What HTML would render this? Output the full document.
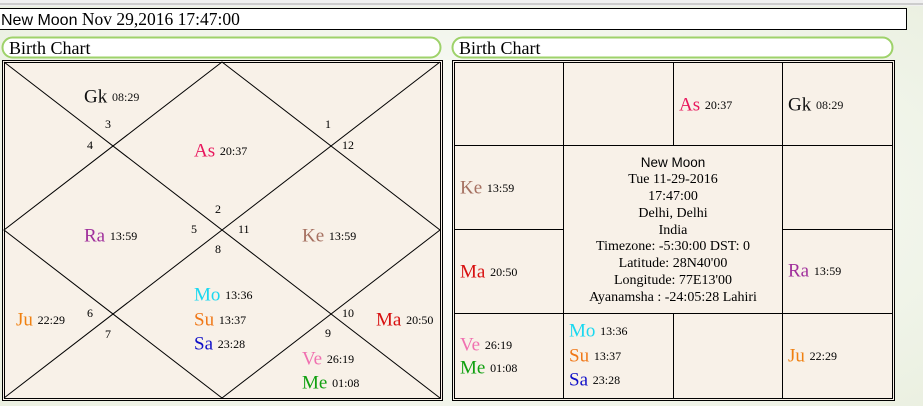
<!DOCTYPE html>
<html><head><meta charset="utf-8"><style>
html,body{margin:0;padding:0;width:923px;height:406px;overflow:hidden;background:#f4f7ef;font-family:"Liberation Serif",serif}
</style></head><body>
<svg width="923" height="406" xmlns="http://www.w3.org/2000/svg" style="position:absolute;left:0;top:0">
<defs>
<radialGradient id="bg" cx="0.5" cy="0.5" r="0.8"><stop offset="0" stop-color="#ffffff"/><stop offset="1" stop-color="#e8eedd"/></radialGradient>
</defs>
<rect width="923" height="406" fill="url(#bg)"/>
<rect x="0" y="0" width="923" height="6" fill="#f0f0f0"/>
<line x1="0" y1="4" x2="923" y2="4" stroke="#aaa"/>
<rect x="0" y="8" width="907" height="21" fill="#fff"/>
<line x1="0" y1="8.5" x2="907" y2="8.5" stroke="#000"/>
<line x1="0" y1="29.5" x2="907" y2="29.5" stroke="#000"/>
<line x1="906.5" y1="8" x2="906.5" y2="30" stroke="#000"/>
<text x="1" y="25" font-family="Liberation Sans,sans-serif" font-size="16">New Moon <tspan font-family="Liberation Serif,serif" font-size="17.5">Nov 29,2016 17:47:00</tspan></text>

<rect x="2.5" y="37.5" width="438" height="20" rx="10" fill="#fff" stroke="#9ed26a" stroke-width="2"/>
<text x="9" y="54" font-size="18">Birth Chart</text>
<rect x="452.5" y="37.5" width="440" height="20" rx="10" fill="#fff" stroke="#9ed26a" stroke-width="2"/>
<text x="459" y="54" font-size="18">Birth Chart</text>

<!-- left chart -->
<rect x="2" y="60" width="441" height="341" fill="#f8f1e8"/>
<rect x="2.5" y="60.5" width="440" height="340" fill="none" stroke="#000"/>
<rect x="4.5" y="62.5" width="436" height="336" fill="none" stroke="#000"/>
<g stroke="#000" stroke-width="1">
<line x1="4" y1="62" x2="440" y2="398"/><line x1="440" y1="62" x2="4" y2="398"/>
<polygon points="222,62 440,230 222,398 4,230" fill="none"/>
</g>
<g font-size="12">
<text x="105" y="128">3</text><text x="87" y="149">4</text><text x="325" y="128">1</text><text x="342" y="149">12</text>
<text x="215" y="213">2</text><text x="191" y="233">5</text><text x="238" y="233">11</text><text x="215" y="253">8</text>
<text x="87" y="317">6</text><text x="105" y="338">7</text><text x="342" y="317">10</text><text x="325" y="337">9</text>
</g>
<g font-size="19" dominant-baseline="central">
<text x="84" y="97" fill="#111">Gk <tspan font-size="12">08:29</tspan></text>
<text x="194" y="151" fill="#e8175d">As <tspan font-size="12" fill="#000">20:37</tspan></text>
<text x="84" y="236" fill="#a0309c">Ra <tspan font-size="12" fill="#000">13:59</tspan></text>
<text x="302" y="236" fill="#a57060">Ke <tspan font-size="12" fill="#000">13:59</tspan></text>
<text x="194" y="295" fill="#1ad8f0">Mo <tspan font-size="12" fill="#000">13:36</tspan></text>
<text x="194" y="320" fill="#f07818">Su <tspan font-size="12" fill="#000">13:37</tspan></text>
<text x="194" y="344" fill="#1010c8">Sa <tspan font-size="12" fill="#000">23:28</tspan></text>
<text x="16" y="320" fill="#f08010">Ju <tspan font-size="12" fill="#000">22:29</tspan></text>
<text x="376" y="320" fill="#d81010">Ma <tspan font-size="12" fill="#000">20:50</tspan></text>
<text x="302" y="359" fill="#f070b0">Ve <tspan font-size="12" fill="#000">26:19</tspan></text>
<text x="302" y="383" fill="#10a010">Me <tspan font-size="12" fill="#000">01:08</tspan></text>
</g>

<!-- right chart -->
<rect x="452" y="60" width="443" height="341" fill="#f8f1e8"/>
<rect x="452.5" y="60.5" width="442" height="340" fill="none" stroke="#000"/>
<rect x="454.5" y="62.5" width="438" height="336" fill="none" stroke="#000"/>
<g stroke="#000">
<line x1="563.5" y1="62" x2="563.5" y2="398"/>
<line x1="782.5" y1="62" x2="782.5" y2="398"/>
<line x1="673.5" y1="62" x2="673.5" y2="146"/>
<line x1="673.5" y1="313" x2="673.5" y2="398"/>
<line x1="454" y1="145.5" x2="893" y2="145.5"/>
<line x1="454" y1="313.5" x2="893" y2="313.5"/>
<line x1="454" y1="229.5" x2="563" y2="229.5"/>
<line x1="782" y1="229.5" x2="893" y2="229.5"/>
</g>
<g font-size="19" dominant-baseline="central">
<text x="679" y="105" fill="#e8175d">As <tspan font-size="12" fill="#000">20:37</tspan></text>
<text x="788" y="105" fill="#111">Gk <tspan font-size="12">08:29</tspan></text>
<text x="460" y="188" fill="#a57060">Ke <tspan font-size="12" fill="#000">13:59</tspan></text>
<text x="460" y="272" fill="#d81010">Ma <tspan font-size="12" fill="#000">20:50</tspan></text>
<text x="788" y="271" fill="#a0309c">Ra <tspan font-size="12" fill="#000">13:59</tspan></text>
<text x="460" y="345" fill="#f070b0">Ve <tspan font-size="12" fill="#000">26:19</tspan></text>
<text x="460" y="368" fill="#10a010">Me <tspan font-size="12" fill="#000">01:08</tspan></text>
<text x="569" y="331" fill="#1ad8f0">Mo <tspan font-size="12" fill="#000">13:36</tspan></text>
<text x="569" y="356" fill="#f07818">Su <tspan font-size="12" fill="#000">13:37</tspan></text>
<text x="569" y="380" fill="#1010c8">Sa <tspan font-size="12" fill="#000">23:28</tspan></text>
<text x="788" y="356" fill="#f08010">Ju <tspan font-size="12" fill="#000">22:29</tspan></text>
</g>
<g font-size="14" text-anchor="middle">
<text x="673" y="167" font-family="Liberation Sans,sans-serif" font-size="13.5">New Moon</text>
<text x="673" y="183">Tue 11-29-2016</text>
<text x="673" y="200">17:47:00</text>
<text x="673" y="217">Delhi, Delhi</text>
<text x="673" y="234">India</text>
<text x="673" y="250">Timezone: -5:30:00 DST: 0</text>
<text x="673" y="267">Latitude: 28N40'00</text>
<text x="673" y="284">Longitude: 77E13'00</text>
<text x="673" y="301">Ayanamsha : -24:05:28 Lahiri</text>
</g>
</svg>
</body></html>
